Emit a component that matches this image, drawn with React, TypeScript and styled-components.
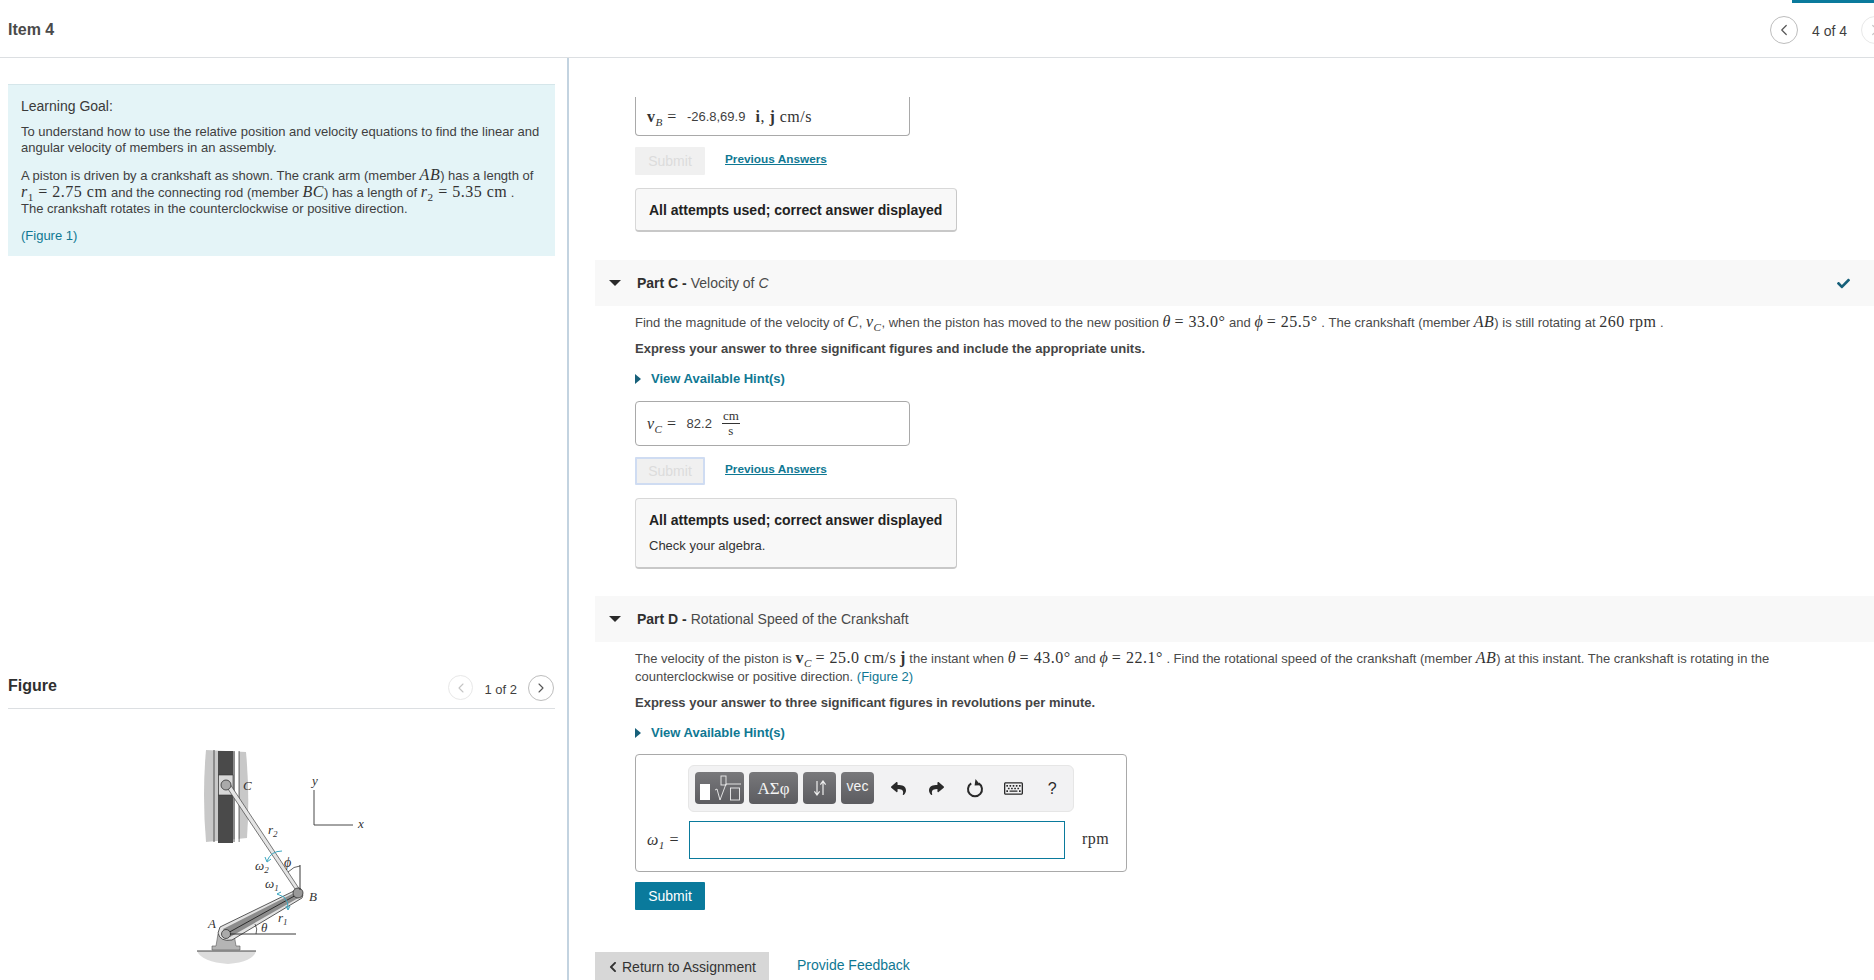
import { ReactNode } from 'react'
import styled, { createGlobalStyle } from 'styled-components'
import { FaReply, FaShare, FaRegKeyboard, FaChevronLeft, FaCheck } from 'react-icons/fa'
import { ChevronLeft, ChevronRight } from 'lucide-react'

const GlobalStyle = createGlobalStyle`
    html, body {
        margin: 0;
        padding: 0;
        background: #fff;
    }
    body {
        font-family: "Liberation Sans", Arial, sans-serif;
        font-size: 14px;
        line-height: 17px;
        color: #3f3f3f;
    }
    sub {
        font-size: 70%;
        line-height: 0;
    }
`

const Page = styled.div`
    width: 1874px;
    height: 980px;
    overflow: hidden;
    display: flex;
    flex-direction: column;
`

const TopBar = styled.header`
    flex: 0 0 58px;
    box-sizing: border-box;
    border-bottom: 1px solid #dcdfe2;
    padding: 0 0 0 8px;
    display: flex;
    align-items: center;
    justify-content: space-between;
    position: relative;
    overflow: hidden;
`

const TopAccent = styled.div`
    position: absolute;
    top: 0;
    right: 0;
    width: 82px;
    height: 3px;
    background: #0a7a9c;
`

const ItemTitle = styled.div`
    font-size: 16px;
    font-weight: bold;
    color: #4a4a4a;
    margin-top: 1px;
`

const Pager = styled.div<{ $gap: number }>`
    display: flex;
    align-items: center;
    gap: ${p => p.$gap}px;
`

const PagerTop = styled(Pager)`
    margin-top: 2px;
    margin-right: -15px;
`

const PagerText = styled.span<{ $size: number }>`
    font-size: ${p => p.$size}px;
    padding-top: 3px;
`

const RoundButton = styled.div<{ $off?: boolean; $size: number }>`
    width: ${p => p.$size}px;
    height: ${p => p.$size}px;
    box-sizing: border-box;
    border-radius: 50%;
    border: 1px solid ${p => (p.$off ? '#e8e8e8' : '#bdbdbd')};
    display: flex;
    align-items: center;
    justify-content: center;
    color: ${p => (p.$off ? '#c4c4c4' : '#555')};
`

const Columns = styled.div`
    flex: 1;
    display: flex;
    min-height: 0;
`

const LeftPanel = styled.aside`
    flex: 0 0 569px;
    box-sizing: border-box;
    border-right: 2px solid #c3d3e0;
    padding: 26px 12px 0 8px;
`

const GoalBox = styled.section`
    height: 172px;
    box-sizing: border-box;
    background: #e4f4f7;
    border-top: 1px solid #d5e6ea;
    padding: 13px 13px;
    font-size: 13px;
    line-height: 16px;
`

const GoalLabel = styled.div`
    color: #3a3a3a;
    font-size: 14px;
    margin-bottom: 10px;
`

const GoalPara = styled.p`
    margin: 0 0 11px;
`

const FigureHead = styled.div`
    margin-top: 412px;
    height: 41px;
    box-sizing: border-box;
    border-bottom: 1px solid #dcdfe2;
    display: flex;
    align-items: center;
    justify-content: space-between;
    padding: 0 1px 1px 0;
`

const FigureTitle = styled.div`
    font-size: 16px;
    font-weight: bold;
    color: #2f2f2f;
    margin-bottom: 4px;
`

const FigureArt = styled.svg`
    display: block;
    margin: 11px 0 0 142px;
`

const RightPanel = styled.main`
    flex: 1;
    min-width: 0;
    padding: 39px 0 0 26px;
    overflow: hidden;
`

const Indented = styled.div`
    padding-left: 40px;
`

const AnswerBox = styled.div<{ $open?: boolean; $h: number; $top?: number }>`
    width: 275px;
    height: ${p => p.$h}px;
    margin-top: ${p => p.$top ?? 0}px;
    box-sizing: border-box;
    border: 1px solid #a9a9a9;
    border-top: ${p => (p.$open ? 'none' : '1px solid #a9a9a9')};
    border-radius: ${p => (p.$open ? '0 0 4px 4px' : '4px')};
    padding: 0 11px;
    display: flex;
    align-items: center;
    gap: 10px;
    font-size: 13px;
`

const Serif = styled.span`
    font-family: "Liberation Serif", "Times New Roman", serif;
    font-size: 16px;
    line-height: 15px;
    letter-spacing: 0.5px;
    color: #333;
    white-space: nowrap;
`

const Var = styled(Serif)`
    font-style: italic;
`

const Bold = styled(Serif)`
    font-weight: bold;
`

const Fraction = styled.span`
    display: inline-flex;
    flex-direction: column;
    align-items: center;
    font-family: "Liberation Serif", "Times New Roman", serif;
    font-size: 13px;
    line-height: 14px;
    color: #333;
`

const FractionTop = styled.span`
    border-bottom: 1px solid #333;
    padding: 0 1px;
`

const ActionRow = styled.div<{ $top?: number }>`
    margin-top: ${p => p.$top ?? 11}px;
    display: flex;
    align-items: flex-start;
    gap: 20px;
`

const SubmitButton = styled.button<{ $state?: 'off' | 'focus' }>`
    width: 70px;
    height: 28px;
    box-sizing: border-box;
    padding: 0;
    border-radius: 1px;
    font: 14px "Liberation Sans", Arial, sans-serif;
    border: ${p => (p.$state === 'focus' ? '2px solid #cfdcf2' : 'none')};
    background: ${p => (p.$state ? '#f0f0f0' : '#0a7a9c')};
    color: ${p => (p.$state ? '#dcdcdc' : '#fff')};
`

const PrevLink = styled.a`
    color: #0f7893;
    font-size: 11.8px;
    font-weight: bold;
    line-height: 25px;
    text-decoration: underline;
`

const Feedback = styled.div<{ $h: number }>`
    margin-top: 13px;
    width: 322px;
    height: ${p => p.$h}px;
    box-sizing: border-box;
    background: #f8f8f8;
    border: 1px solid #d8d8d8;
    border-right-color: #c8c8c8;
    border-bottom: 2px solid #c8c8c8;
    border-radius: 4px;
    padding: 13px 13px 0;
    color: #333;
`

const FeedbackTitle = styled.div`
    font-weight: bold;
    font-size: 14px;
    color: #222;
`

const FeedbackNote = styled.div`
    margin-top: 9px;
    font-size: 13px;
    line-height: 16px;
`

const PartHeader = styled.div<{ $top: number }>`
    margin-top: ${p => p.$top}px;
    height: 46px;
    background: #f8f8f8;
    display: flex;
    align-items: center;
    padding: 0 24px 0 14px;
`

const PartCaret = styled.span`
    width: 0;
    height: 0;
    border-left: 6px solid transparent;
    border-right: 6px solid transparent;
    border-top: 6px solid #2a2a2a;
    margin-right: 16px;
`

const PartName = styled.div`
    flex: 1;
    font-size: 14px;
    color: #4a4a4a;
`

const PartStrong = styled.b`
    color: #2f2f2f;
`

const Prompt = styled.p`
    margin: 8px 0 0;
    width: 1180px;
    font-size: 13px;
    line-height: 18px;
    color: #4a4a4a;
`

const Instruction = styled.p`
    margin: 8px 0 0;
    font-size: 13px;
    line-height: 17px;
    font-weight: bold;
    color: #444;
`

const HintLink = styled.div`
    margin-top: 13px;
    height: 17px;
    display: flex;
    align-items: center;
    gap: 10px;
    font-size: 13px;
    font-weight: bold;
    color: #0f7893;
`

const HintCaret = styled.span`
    width: 0;
    height: 0;
    border-top: 5px solid transparent;
    border-bottom: 5px solid transparent;
    border-left: 6px solid #17607a;
`

const FigLink = styled.a`
    color: #0f7893;
`

const EditorBox = styled.div`
    margin-top: 13px;
    width: 492px;
    height: 118px;
    box-sizing: border-box;
    border: 1px solid #a9a9a9;
    border-radius: 4px;
    padding: 10px 0 0 11px;
`

const Toolbar = styled.div`
    margin-left: 41px;
    width: 386px;
    height: 47px;
    box-sizing: border-box;
    background: #f2f2f3;
    border: 1px solid #e6e6e6;
    border-radius: 6px;
    padding: 6px 0 0 6px;
    display: flex;
`

const ToolButton = styled.div<{ $w: number }>`
    width: ${p => p.$w}px;
    height: 32px;
    margin-right: 5px;
    flex: none;
    border-radius: 4px;
    background: linear-gradient(#78787b, #5c5c60);
    color: #f4f4f4;
    display: flex;
    align-items: center;
    justify-content: center;
`

const GreekLabel = styled.span`
    font-family: "Liberation Serif", "Times New Roman", serif;
    font-size: 17px;
`

const VecLabel = styled.span`
    font-size: 14px;
    margin-top: -3px;
`

const ToolIcon = styled.div`
    width: 38.5px;
    height: 32px;
    flex: none;
    display: flex;
    align-items: center;
    justify-content: center;
    color: #2a2a2a;
    font-size: 16px;
`

const InputRow = styled.div`
    margin-top: 9px;
    display: flex;
    align-items: center;
`

const InputLabel = styled.div`
    width: 42px;
    flex: none;
    white-space: nowrap;
`

const MathInput = styled.div`
    width: 376px;
    height: 38px;
    box-sizing: border-box;
    border: 1px solid #0a7a9c;
`

const UnitLabel = styled(Serif)`
    margin-left: 17px;
    margin-top: -3px;
`

const FooterRow = styled.div`
    margin-top: 42px;
    display: flex;
    align-items: center;
    gap: 28px;
`

const ReturnButton = styled.div`
    width: 174px;
    height: 30px;
    box-sizing: border-box;
    background: #d7d7d7;
    color: #333;
    display: flex;
    align-items: center;
    padding-left: 12px;
    gap: 3px;
`

const FeedbackLink = styled.a`
    color: #0f7893;
    margin-top: -3px;
`

function PagerButton({ dir, off, size, icon }: { dir: 'l' | 'r'; off?: boolean; size: number; icon: number }) {
    return (
        <RoundButton $off={off} $size={size}>
            {dir === 'l' ? <ChevronLeft size={icon} strokeWidth={1.6} /> : <ChevronRight size={icon} strokeWidth={1.6} />}
        </RoundButton>
    )
}

function Label({ children }: { children: ReactNode }) {
    return <Var>{children}</Var>
}

function CrankFigure() {
    return (
        <FigureArt width="250" height="260" viewBox="0 0 250 260">
            <path d="M56 30 Q52 75 56 122 L97 118 Q100 75 96 32 Z" fill="#c8c8c8" />
            <rect x="68" y="31" width="15" height="92" fill="#4a4a4a" />
            <path d="M64 30V122M84 31V122M89 31V122" stroke="#333" strokeWidth="0.8" fill="none" />
            <rect x="85" y="31" width="3.4" height="91" fill="#fff" />
            <rect x="68.5" y="55" width="14.5" height="20" fill="#d8d8d8" stroke="#333" strokeWidth="0.6" />
            <path d="M74 63 L147 172 L150 170 L78 61 Z" fill="#e4e4e4" stroke="#444" strokeWidth="0.7" />
            <circle cx="76" cy="65" r="5" fill="#aaa" stroke="#333" strokeWidth="0.8" />
            <path d="M47 231 H106 Q103 242 78 244 Q52 242 47 231 Z" fill="#dcdcdc" />
            <path d="M62 230 V226 H66 L68 214 H84 L86 226 H90 V230 Z" fill="#b4b4b4" stroke="#555" strokeWidth="0.6" />
            <line x1="47" y1="231" x2="106" y2="231" stroke="#333" strokeWidth="0.9" />
            <path d="M70 207 L146 170 Q155 172 152 178 L82 220 Q70 222 68 213 Z" fill="#e2e2e2" stroke="#333" strokeWidth="0.8" />
            <path d="M73 209 L146 172 L150 177 L80 217 Z" fill="#8c8c8c" />
            <line x1="76" y1="214" x2="148" y2="174" stroke="#222" strokeWidth="0.9" />
            <circle cx="76" cy="214" r="4.5" fill="#aaa" stroke="#333" strokeWidth="0.8" />
            <circle cx="148" cy="173" r="5" fill="#999" stroke="#333" strokeWidth="0.8" />
            <line x1="80" y1="214" x2="146" y2="214" stroke="#222" strokeWidth="0.9" />
            <line x1="150" y1="170" x2="150" y2="145" stroke="#222" strokeWidth="0.9" />
            <path d="M138 152 Q144 146 150 146" stroke="#222" strokeWidth="0.7" fill="none" />
            <path d="M105 204 Q108 209 106 214" stroke="#222" strokeWidth="0.7" fill="none" />
            <path d="M164 70 V105 H203" stroke="#333" strokeWidth="0.9" fill="none" />
            <path d="M132 131 Q121 131 117 141 M115 137 L117 142 L121 139" stroke="#3aa6bf" strokeWidth="1" fill="none" />
            <path d="M127 174 L134 177 Q139 182 138 189 M136 186 L138 190 L140 186 M127 174 L131 172" stroke="#3aa6bf" strokeWidth="1" fill="none" />
            <g fontFamily="Liberation Serif, serif" fontStyle="italic" fontSize="13" fill="#333">
                <text x="93" y="70">C</text>
                <text x="162" y="65">y</text>
                <text x="208" y="108">x</text>
                <text x="118" y="114">r<tspan fontSize="9" dy="3">2</tspan></text>
                <text x="105" y="150">ω<tspan fontSize="9" dy="3">2</tspan></text>
                <text x="134" y="147" fontSize="14">ϕ</text>
                <text x="115" y="168">ω<tspan fontSize="9" dy="3">1</tspan></text>
                <text x="159" y="181">B</text>
                <text x="128" y="202">r<tspan fontSize="9" dy="3">1</tspan></text>
                <text x="111" y="212">θ</text>
                <text x="58" y="208">A</text>
            </g>
        </FigureArt>
    )
}

function TemplateIcon() {
    return (
        <svg width="44" height="26" viewBox="0 0 44 26">
            <rect x="2" y="9" width="10" height="16" fill="#fff" />
            <rect x="23" y="1" width="5" height="9" fill="none" stroke="#eee" strokeWidth="0.9" />
            <path d="M17 15 L19 14 L22 25 L28 9 H43" fill="none" stroke="#eee" strokeWidth="0.9" />
            <rect x="32.5" y="13" width="9" height="12" fill="none" stroke="#eee" strokeWidth="0.9" />
        </svg>
    )
}

function ArrowsIcon() {
    return (
        <svg width="16" height="18" viewBox="0 0 16 18">
            <path d="M5 2V15M2.4 12.4L5 16L7.6 12.4M11 16V3M8.4 5.6L11 2L13.6 5.6" fill="none" stroke="#eee" strokeWidth="1.2" />
        </svg>
    )
}

function ResetIcon() {
    return (
        <svg width="18" height="20" viewBox="0 0 18 20">
            <path d="M5.2 5.4 A7 7 0 1 0 12.8 5.4" fill="none" stroke="#2a2a2a" strokeWidth="2" />
            <path d="M9.5 1 L14.6 7.2 L8.6 7.6 Z" fill="#2a2a2a" />
        </svg>
    )
}

export default function App() {
    return (
        <Page>
            <GlobalStyle />
            <TopBar>
                <TopAccent />
                <ItemTitle>Item 4</ItemTitle>
                <PagerTop $gap={14}>
                    <PagerButton dir="l" size={28} icon={18} />
                    <PagerText $size={14}>4 of 4</PagerText>
                    <PagerButton dir="r" off size={28} icon={18} />
                </PagerTop>
            </TopBar>
            <Columns>
                <LeftPanel>
                    <GoalBox>
                        <GoalLabel>Learning Goal:</GoalLabel>
                        <GoalPara>To understand how to use the relative position and velocity equations to find the linear and angular velocity of members in an assembly.</GoalPara>
                        <GoalPara>
                            A piston is driven by a crankshaft as shown. The crank arm (member <Label>AB</Label>) has a length of{' '}
                            <Label>r</Label><Serif><sub>1</sub> = 2.75 cm</Serif> and the connecting rod (member <Label>BC</Label>) has a length of{' '}
                            <Label>r</Label><Serif><sub>2</sub> = 5.35 cm</Serif> .<br />
                            The crankshaft rotates in the counterclockwise or positive direction.
                        </GoalPara>
                        <GoalPara><FigLink>(Figure 1)</FigLink></GoalPara>
                    </GoalBox>
                    <FigureHead>
                        <FigureTitle>Figure</FigureTitle>
                        <Pager $gap={11}>
                            <PagerButton dir="l" off size={25} icon={16} />
                            <PagerText $size={13}>1 of 2</PagerText>
                            <PagerButton dir="r" size={26} icon={16} />
                        </Pager>
                    </FigureHead>
                    <CrankFigure />
                </LeftPanel>
                <RightPanel>
                    <Indented>
                        <AnswerBox $open $h={39}>
                            <Serif><Bold>v</Bold><Var><sub>B</sub></Var> =</Serif>
                            <span>-26.8,69.9</span>
                            <Serif><Bold>i</Bold>, <Bold>j</Bold> cm/s</Serif>
                        </AnswerBox>
                        <ActionRow>
                            <SubmitButton $state="off">Submit</SubmitButton>
                            <PrevLink>Previous Answers</PrevLink>
                        </ActionRow>
                        <Feedback $h={44}>
                            <FeedbackTitle>All attempts used; correct answer displayed</FeedbackTitle>
                        </Feedback>
                    </Indented>

                    <PartHeader $top={28}>
                        <PartCaret />
                        <PartName><PartStrong>Part C - </PartStrong>Velocity of <i>C</i></PartName>
                        <FaCheck size={13} color="#17607a" />
                    </PartHeader>
                    <Indented>
                        <Prompt>
                            Find the magnitude of the velocity of <Label>C</Label>, <Label>v<sub>C</sub></Label>, when the piston has moved to the new position{' '}
                            <Label>θ</Label> <Serif>= 33.0°</Serif> and <Label>ϕ</Label> <Serif>= 25.5°</Serif> . The crankshaft (member <Label>AB</Label>) is still rotating at <Serif>260 rpm</Serif> .
                        </Prompt>
                        <Instruction>Express your answer to three significant figures and include the appropriate units.</Instruction>
                        <HintLink><HintCaret />View Available Hint(s)</HintLink>
                        <AnswerBox $h={45} $top={14}>
                            <Serif><Var>v<sub>C</sub></Var> =</Serif>
                            <span>82.2</span>
                            <Fraction><FractionTop>cm</FractionTop><span>s</span></Fraction>
                        </AnswerBox>
                        <ActionRow>
                            <SubmitButton $state="focus">Submit</SubmitButton>
                            <PrevLink>Previous Answers</PrevLink>
                        </ActionRow>
                        <Feedback $h={71}>
                            <FeedbackTitle>All attempts used; correct answer displayed</FeedbackTitle>
                            <FeedbackNote>Check your algebra.</FeedbackNote>
                        </Feedback>
                    </Indented>

                    <PartHeader $top={27}>
                        <PartCaret />
                        <PartName><PartStrong>Part D - </PartStrong>Rotational Speed of the Crankshaft</PartName>
                    </PartHeader>
                    <Indented>
                        <Prompt>
                            The velocity of the piston is <Bold>v</Bold><Var><sub>C</sub></Var> <Serif>= 25.0 cm/s</Serif> <Bold>j</Bold> the instant when <Label>θ</Label> <Serif>= 43.0°</Serif> and <Label>ϕ</Label> <Serif>= 22.1°</Serif> . Find the rotational speed of the crankshaft (member <Label>AB</Label>) at this instant. The crankshaft is rotating in the counterclockwise or positive direction. <FigLink>(Figure 2)</FigLink>
                        </Prompt>
                        <Instruction>Express your answer to three significant figures in revolutions per minute.</Instruction>
                        <HintLink><HintCaret />View Available Hint(s)</HintLink>
                        <EditorBox>
                            <Toolbar>
                                <ToolButton $w={49}><TemplateIcon /></ToolButton>
                                <ToolButton $w={49}><GreekLabel>ΑΣφ</GreekLabel></ToolButton>
                                <ToolButton $w={33}><ArrowsIcon /></ToolButton>
                                <ToolButton $w={33}><VecLabel>vec</VecLabel></ToolButton>
                                <ToolIcon><FaReply size={15} /></ToolIcon>
                                <ToolIcon><FaShare size={15} /></ToolIcon>
                                <ToolIcon><ResetIcon /></ToolIcon>
                                <ToolIcon><FaRegKeyboard size={19} /></ToolIcon>
                                <ToolIcon>?</ToolIcon>
                            </Toolbar>
                            <InputRow>
                                <InputLabel><Serif><Var>ω<sub>1</sub></Var> =</Serif></InputLabel>
                                <MathInput />
                                <UnitLabel>rpm</UnitLabel>
                            </InputRow>
                        </EditorBox>
                        <ActionRow $top={10}>
                            <SubmitButton>Submit</SubmitButton>
                        </ActionRow>
                    </Indented>
                    <FooterRow>
                        <ReturnButton><FaChevronLeft size={12} />Return to Assignment</ReturnButton>
                        <FeedbackLink>Provide Feedback</FeedbackLink>
                    </FooterRow>
                </RightPanel>
            </Columns>
        </Page>
    )
}
